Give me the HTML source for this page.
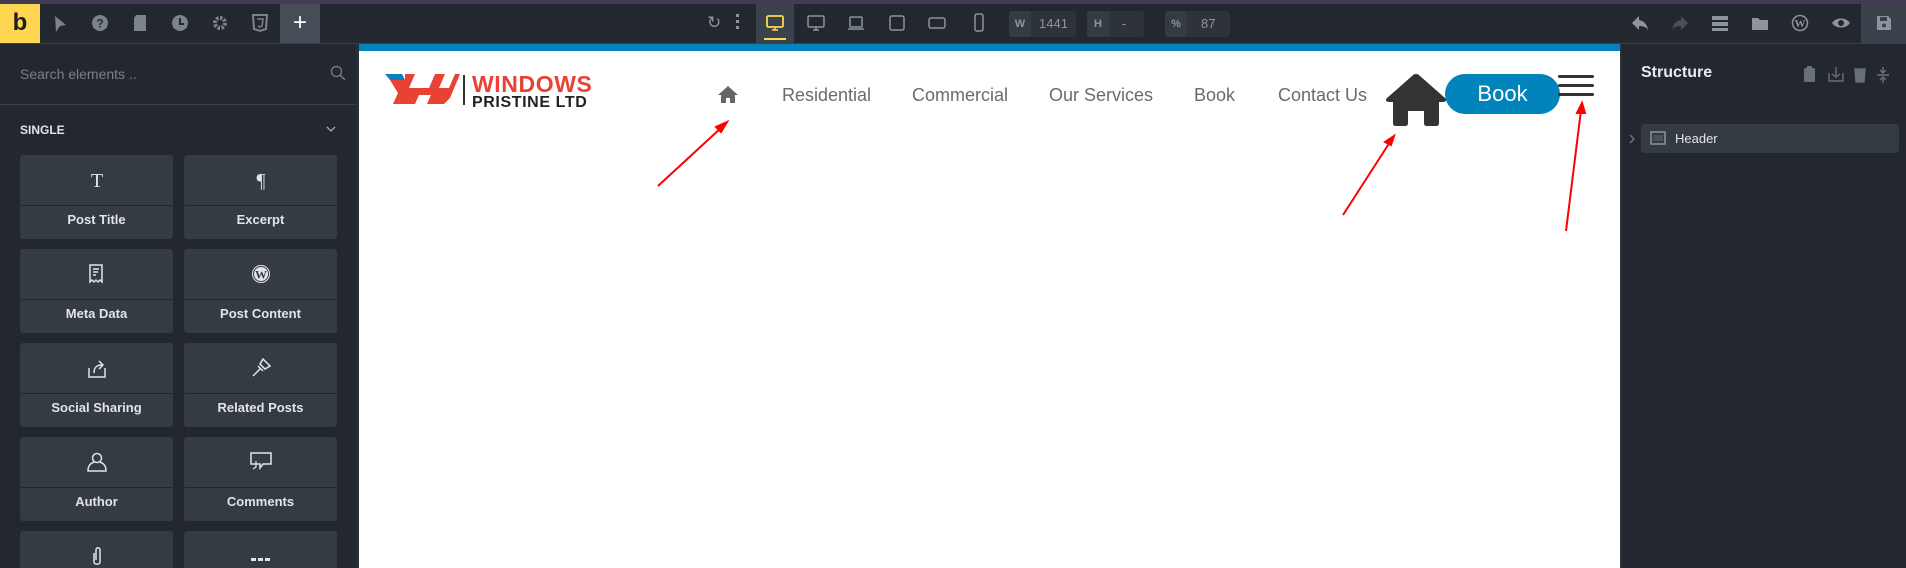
<!DOCTYPE html>
<html style="width:1906px;height:568px;overflow:hidden"><head><meta charset="utf-8"><style>
*{margin:0;padding:0;box-sizing:border-box}
html,body{width:1906px;height:568px;overflow:hidden}
body{background:#23272f;font-family:"Liberation Sans",sans-serif;position:relative}
.a{position:absolute}
.tb{left:0;top:0;width:1906px;height:44px;background:#23272f;border-top:4px solid #433b52;border-bottom:1px solid #3a4048}
.card{position:absolute;width:153px;height:84px;background:#343b43;border-radius:3px}
.card .div{position:absolute;left:1px;right:1px;top:50px;height:1px;background:#22262c}
.card .lb{position:absolute;left:0;right:0;top:57px;text-align:center;color:#e2e4e6;font-size:13px;font-weight:bold}
.card svg{position:absolute;left:66px;top:14px}
.nav{position:absolute;top:85px;font-size:18px;color:#6b6b6b}
.ib{position:absolute;height:26px;top:11px;background:#2e333b;border-radius:3px;color:#8d949c;font-size:13px}
</style></head><body>
<div class="a tb"></div>
<div class="a" style="left:0;top:4px;width:40px;height:39px;background:#ffd64f;font:bold 24px 'Liberation Sans',sans-serif;color:#1e1e1e;text-align:center;line-height:38px">b</div>
<svg class="a" style="left:50px;top:14px" width="20" height="20"><path d="M5 2 L16 11 L10 12 L6 18 Z" fill="#7c838b"/></svg>
<svg class="a" style="left:90px;top:13px" width="20" height="20"><circle cx="10" cy="10" r="8" fill="#7c838b"/><text x="10" y="14.5" text-anchor="middle" font-size="12" font-weight="bold" fill="#23272f" font-family="Liberation Sans">?</text></svg>
<svg class="a" style="left:132px;top:13px" width="16" height="20"><path d="M4 2 H14 V18 H2 V5 Z" fill="#7c838b"/></svg>
<svg class="a" style="left:170px;top:13px" width="20" height="20"><circle cx="10" cy="10" r="8" fill="#7c838b"/><path d="M10 5 V11 H14" stroke="#23272f" stroke-width="2" fill="none"/></svg>
<svg class="a" style="left:210px;top:13px" width="20" height="20"><circle cx="10" cy="10" r="5" fill="none" stroke="#7c838b" stroke-width="4" stroke-dasharray="2.5 1.4"/><circle cx="10" cy="10" r="2" fill="#23272f"/></svg>
<svg class="a" style="left:251px;top:13px" width="18" height="20"><path d="M2 2 H16 L15 16 L9 18 L3 16 Z" fill="none" stroke="#7c838b" stroke-width="2"/><path d="M6 6 H12 L11 13 L9 14 L7 13" fill="none" stroke="#7c838b" stroke-width="1.5"/></svg>
<div class="a" style="left:280px;top:4px;width:40px;height:39px;background:#454e57;color:#fff;font-size:24px;text-align:center;line-height:38px">+</div>
<div class="a" style="left:707px;top:13px;color:#8d949c;font-size:17px">↻</div>
<div class="a" style="left:736px;top:14px;width:3px;height:3px;background:#8d949c;box-shadow:0 6px #8d949c,0 12px #8d949c"></div>
<div class="a" style="left:756px;top:4px;width:38px;height:39px;background:#3a424b"></div>
<div class="a" style="left:764px;top:38px;width:22px;height:2px;background:#ffd64f"></div>
<svg class="a" style="left:765px;top:14px" width="20" height="18"><rect x="2" y="2" width="16" height="11" rx="1.5" fill="none" stroke="#ffd64f" stroke-width="1.8"/><path d="M10 13 V16 M7 16 H13" stroke="#ffd64f" stroke-width="1.5"/></svg>
<svg class="a" style="left:806px;top:14px" width="20" height="18"><rect x="2" y="2" width="16" height="11" rx="1.5" fill="none" stroke="#8d949c" stroke-width="1.5"/><path d="M10 13 V16 M7 16 H13" stroke="#8d949c" stroke-width="1.5"/></svg>
<svg class="a" style="left:846px;top:14px" width="20" height="18"><rect x="4" y="3" width="12" height="10" rx="1" fill="none" stroke="#8d949c" stroke-width="1.5"/><path d="M2 15 H18" stroke="#8d949c" stroke-width="1.5"/></svg>
<svg class="a" style="left:887px;top:14px" width="20" height="18"><rect x="3" y="2" width="14" height="14" rx="2" fill="none" stroke="#8d949c" stroke-width="1.5"/></svg>
<svg class="a" style="left:927px;top:14px" width="20" height="18"><rect x="2" y="4" width="16" height="10" rx="2" fill="none" stroke="#8d949c" stroke-width="1.5"/></svg>
<svg class="a" style="left:969px;top:13px" width="20" height="20"><rect x="6" y="1" width="8" height="17" rx="2" fill="none" stroke="#8d949c" stroke-width="1.5"/></svg>
<div class="ib" style="left:1009px;width:67px"><span class="a" style="left:0;top:0;width:22px;height:26px;background:#353b43;border-radius:3px 0 0 3px;text-align:center;line-height:26px;font-weight:bold;font-size:11px">W</span><span class="a" style="left:30px;line-height:26px">1441</span></div>
<div class="ib" style="left:1087px;width:57px"><span class="a" style="left:0;top:0;width:22px;height:26px;background:#353b43;border-radius:3px 0 0 3px;text-align:center;line-height:26px;font-weight:bold;font-size:11px">H</span><span class="a" style="left:35px;line-height:26px">-</span></div>
<div class="ib" style="left:1165px;width:65px"><span class="a" style="left:0;top:0;width:22px;height:26px;background:#353b43;border-radius:3px 0 0 3px;text-align:center;line-height:26px;font-weight:bold;font-size:11px">%</span><span class="a" style="left:36px;line-height:26px">87</span></div>
<svg class="a" style="left:1630px;top:14px" width="20" height="18"><path d="M9 2 L2 9 L9 16 V12 C13 12 16 13 18 16 C17 10 14 7 9 6 Z" fill="#8d949c"/></svg>
<svg class="a" style="left:1670px;top:14px" width="20" height="18"><path d="M11 2 L18 9 L11 16 V12 C7 12 4 13 2 16 C3 10 6 7 11 6 Z" fill="#4a5058"/></svg>
<svg class="a" style="left:1711px;top:14px" width="18" height="18"><rect x="1" y="2" width="16" height="4" fill="#8d949c"/><rect x="1" y="8" width="16" height="4" fill="#8d949c"/><rect x="1" y="14" width="16" height="3" fill="#8d949c"/></svg>
<svg class="a" style="left:1751px;top:14px" width="18" height="18"><path d="M1 4 H7 L9 6 H17 V16 H1 Z" fill="#8d949c"/></svg>
<svg class="a" style="left:1791px;top:14px" width="18" height="18"><circle cx="9" cy="9" r="7.5" fill="none" stroke="#8d949c" stroke-width="1.5"/><text x="9" y="13" text-anchor="middle" font-size="11" font-weight="bold" fill="#8d949c" font-family="Liberation Serif">W</text></svg>
<svg class="a" style="left:1831px;top:15px" width="20" height="16"><path d="M1 8 C5 2 15 2 19 8 C15 14 5 14 1 8 Z" fill="#8d949c"/><circle cx="10" cy="8" r="3" fill="#23272f"/></svg>
<div class="a" style="left:1861px;top:4px;width:45px;height:39px;background:#3a424b"></div>
<svg class="a" style="left:1876px;top:15px" width="16" height="16"><path d="M1 1 H12 L15 4 V15 H1 Z" fill="#8d949c"/><rect x="4" y="2" width="7" height="4" fill="#3a424b"/><circle cx="8" cy="10.5" r="2" fill="#3a424b"/></svg>

<div class="a" style="left:20px;top:66px;color:#7a8087;font-size:14px">Search elements ..</div>
<svg class="a" style="left:330px;top:65px" width="16" height="16"><circle cx="6.5" cy="6.5" r="5" fill="none" stroke="#7a8087" stroke-width="1.3"/><path d="M10 10 L15 15" stroke="#7a8087" stroke-width="1.3"/></svg>
<div class="a" style="left:0;top:104px;width:356px;height:1px;background:#3a4048"></div>
<div class="a" style="left:20px;top:123px;color:#e2e4e6;font-size:12px;font-weight:bold">SINGLE</div>
<svg class="a" style="left:326px;top:125px" width="10" height="8"><path d="M1 2 L5 6 L9 2" stroke="#aab" stroke-width="1.3" fill="none"/></svg>
<div class="a" style="left:356px;top:44px;width:3px;height:524px;background:#2a2f36"></div>

<div class="card" style="left:20px;top:155px"><svg width="22" height="22"><text x="11" y="18" text-anchor="middle" font-family="Liberation Serif" font-size="20" fill="#e2e4e6">T</text></svg><div class="div"></div><div class="lb">Post Title</div></div>
<div class="card" style="left:184px;top:155px"><svg width="22" height="22"><text x="11" y="18" text-anchor="middle" font-family="Liberation Serif" font-size="20" fill="#e2e4e6">¶</text></svg><div class="div"></div><div class="lb">Excerpt</div></div>
<div class="card" style="left:20px;top:249px"><svg width="22" height="22"><path d="M4 2 H16 V19 L14 17 L12 19 L10 17 L8 19 L6 17 L4 19 Z" fill="none" stroke="#e2e4e6" stroke-width="1.5"/><path d="M7 6 H13 M7 9 H12 M7 12 H10" stroke="#e2e4e6" stroke-width="1.5"/></svg><div class="div"></div><div class="lb">Meta Data</div></div>
<div class="card" style="left:184px;top:249px"><svg width="22" height="22"><circle cx="11" cy="11" r="9" fill="#e2e4e6"/><circle cx="11" cy="11" r="7.5" fill="none" stroke="#343b43" stroke-width="1"/><text x="11" y="15.5" text-anchor="middle" font-family="Liberation Serif" font-size="12" font-weight="bold" fill="#343b43">W</text></svg><div class="div"></div><div class="lb">Post Content</div></div>
<div class="card" style="left:20px;top:343px"><svg width="22" height="22"><path d="M3 11 V20 H19 V11" fill="none" stroke="#e2e4e6" stroke-width="1.5"/><path d="M8 16 C8 10 11 8 16 8 M13 4 L17 8 L13 12" fill="none" stroke="#e2e4e6" stroke-width="1.5"/></svg><div class="div"></div><div class="lb">Social Sharing</div></div>
<div class="card" style="left:184px;top:343px"><svg width="22" height="22"><path d="M13 2 L20 9 L15 12 L10 7 Z" fill="none" stroke="#e2e4e6" stroke-width="1.5"/><path d="M8 9 L13 14 M10 12 L3 19" stroke="#e2e4e6" stroke-width="1.5"/></svg><div class="div"></div><div class="lb">Related Posts</div></div>
<div class="card" style="left:20px;top:437px"><svg width="22" height="22"><circle cx="11" cy="7" r="4.5" fill="none" stroke="#e2e4e6" stroke-width="1.5"/><path d="M8 11 C3 13 2 16 2 20 H20 C20 16 19 13 14 11" fill="none" stroke="#e2e4e6" stroke-width="1.5"/></svg><div class="div"></div><div class="lb">Author</div></div>
<div class="card" style="left:184px;top:437px"><svg width="22" height="22"><path d="M1 2 H21 V13 H13 L10 17 V13 H1 Z" fill="none" stroke="#e2e4e6" stroke-width="1.5"/><path d="M6 10 V16 L3 18" fill="none" stroke="#e2e4e6" stroke-width="1.2"/></svg><div class="div"></div><div class="lb">Comments</div></div>
<div class="card" style="left:20px;top:531px;height:37px;border-radius:3px 3px 0 0"><svg width="22" height="22"><path d="M8 8 V17 C8 20 14 20 14 17 V5 C14 2 10 2 10 5 V15" fill="none" stroke="#e2e4e6" stroke-width="1.5"/></svg></div>
<div class="card" style="left:184px;top:531px;height:37px;border-radius:3px 3px 0 0"><svg width="22" height="22"><rect x="1" y="13" width="5" height="3" fill="#e2e4e6"/><rect x="8" y="13" width="5" height="3" fill="#e2e4e6"/><rect x="15" y="13" width="5" height="3" fill="#e2e4e6"/></svg></div>

<div class="a" style="left:359px;top:44px;width:1261px;height:524px;background:#fff"></div>
<div class="a" style="left:359px;top:44px;width:1261px;height:7px;background:#0084bb"></div>
<svg class="a" style="left:385px;top:74px" width="75" height="31"><path d="M0 0 H17 L20 6 H5 Z" fill="#0a7fbd"/><path d="M20 0 H30 L24 14 H44 L50 0 H60 L54 14 H64 L70 0 H75 L65 24 L59 30 H42 L46 21 H34 L30 30 H8 L13 19 L5 6 H20 Z" fill="#e94133"/></svg>
<div class="a" style="left:463px;top:75px;width:2px;height:30px;background:#333"></div>
<div class="a" style="left:472px;top:71px;font-size:23px;font-weight:bold;color:#e94133;letter-spacing:0.6px">WINDOWS</div>
<div class="a" style="left:472px;top:94px;font-size:16px;font-weight:bold;color:#222;letter-spacing:0.6px">PRISTINE LTD</div>

<svg class="a" style="left:717px;top:85px" width="22" height="20"><path d="M11 1 L21 10 H18 V18 H13 V13 H9 V18 H4 V10 H1 Z" fill="#666"/></svg>
<div class="nav" style="left:782px">Residential</div>
<div class="nav" style="left:912px">Commercial</div>
<div class="nav" style="left:1049px">Our Services</div>
<div class="nav" style="left:1194px">Book</div>
<div class="nav" style="left:1278px">Contact Us</div>

<svg class="a" style="left:1385px;top:73px" width="62" height="54"><path d="M31 1 C33 1 34 2 35 3 L60 25 C62 27 61 29 58 29 H54 V50 C54 52 53 53 51 53 H42 C40 53 39 52 39 50 V38 H23 V50 C23 52 22 53 20 53 H11 C9 53 8 52 8 50 V29 H4 C1 29 0 27 2 25 L27 3 C28 2 29 1 31 1 Z" fill="#333"/></svg>
<div class="a" style="left:1445px;top:74px;width:115px;height:40px;border-radius:20px;background:#0084bb;color:#fff;font-size:22px;text-align:center;line-height:40px">Book</div>
<div class="a" style="left:1558px;top:75px;width:36px;height:3px;border-radius:2px;background:#333;box-shadow:0 9px #333,0 18px #333"></div>

<svg class="a" style="left:0;top:0" width="1906" height="568">
<g stroke="#f00" stroke-width="2" fill="#f00">
<line x1="658" y1="186" x2="722" y2="127"/><path d="M727 122 L716 127 L721 132 Z"/>
<line x1="1343" y1="215" x2="1390" y2="142"/><path d="M1394 136 L1385 142 L1391 145 Z"/>
<line x1="1566" y1="231" x2="1581" y2="110"/><path d="M1582 103 L1577 113 L1585 113 Z"/>
</g></svg>

<div class="a" style="left:1620px;top:44px;width:2px;height:524px;background:#2c3138"></div>
<div class="a" style="left:1641px;top:64px;color:#e8eaec;font-size:16px;font-weight:bold">Structure</div>
<svg class="a" style="left:1803px;top:65px" width="100" height="20"><rect x="1" y="3" width="11" height="14" rx="1.5" fill="#6a7078"/><rect x="4" y="1" width="5" height="3" fill="#6a7078"/><path d="M26 8 V16 H40 V8 M33 2 V12 M29 9 L33 12 L37 9" fill="none" stroke="#6a7078" stroke-width="1.4"/><path d="M52 5 H62 L61 17 H53 Z M51 4 H63" fill="#6a7078" stroke="#6a7078" stroke-width="1.2"/><path d="M80 2 V8 M77 5 L80 8 L83 5 M80 18 V12 M77 15 L80 12 L83 15 M74 10 H86" fill="none" stroke="#6a7078" stroke-width="1.4"/></svg>
<svg class="a" style="left:1628px;top:133px" width="8" height="12"><path d="M2 2 L6 6 L2 10" fill="none" stroke="#777" stroke-width="1.3"/></svg>
<div class="a" style="left:1641px;top:124px;width:258px;height:29px;background:#343b43;border-radius:3px"></div>
<svg class="a" style="left:1650px;top:130px" width="16" height="16"><rect x="1" y="2" width="14" height="12" fill="none" stroke="#8d949c" stroke-width="1.5"/><rect x="3" y="5" width="10" height="6" fill="#4a5159"/></svg>
<div class="a" style="left:1675px;top:131px;color:#e2e4e6;font-size:13px">Header</div>
</body></html>
